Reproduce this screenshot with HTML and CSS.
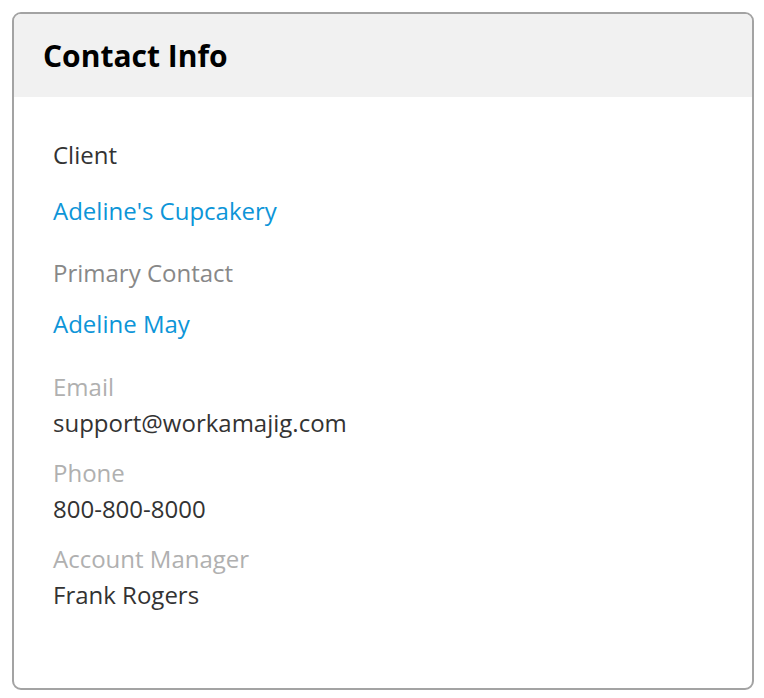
FILE: index.html
```html
<!DOCTYPE html>
<html>
<head>
<meta charset="utf-8">
<link rel="stylesheet" href="styles.css">
</head>
<body>
<div class="card">
  <div class="card-header"><h2 class="title">Contact Info</h2></div>
  <div class="card-body">
    <div class="label-dark">Client</div>
    <a class="link link-client" href="#">Adeline's Cupcakery</a>
    <div class="label-mid">Primary Contact</div>
    <a class="link link-contact" href="#">Adeline May</a>
    <div class="field field-first">
      <div class="label-light">Email</div>
      <div class="value">support@workamajig.com</div>
    </div>
    <div class="field">
      <div class="label-light">Phone</div>
      <div class="value">800-800-8000</div>
    </div>
    <div class="field">
      <div class="label-light">Account Manager</div>
      <div class="value">Frank Rogers</div>
    </div>
  </div>
</div>
</body>
</html>
```
FILE: styles.css
```css
html, body { margin: 0; padding: 0; background: #fff; }
body { padding: 12px 10px 0 12px; font-family: "Open Sans", "Liberation Sans", sans-serif; }
.card {
  width: 742px;
  height: 678px;
  box-sizing: border-box;
  border: 2px solid #a3a3a3;
  border-radius: 9px;
  overflow: hidden;
}
.card-header {
  background: #f1f1f1;
  height: 83px;
  display: flex;
  align-items: center;
  padding-left: 29px;
}
.title { margin: 0; font-size: 30px; font-weight: 700; color: #000; }
.card-body { padding: 40px 39px 25px; display: flex; flex-direction: column; align-items: flex-start; font-size: 24px; line-height: 36px; }
.label-dark { color: #333; }
.label-mid { color: #888; margin-top: 26px; }
.label-light { color: #b0b0b0; }
.link { color: #0d95d8; text-decoration: none; }
.link-client { margin-top: 20px; }
.link-contact { margin-top: 15px; }
.value { color: #333; }
.field { margin-top: 14px; }
.field-first { margin-top: 27px; }
```
